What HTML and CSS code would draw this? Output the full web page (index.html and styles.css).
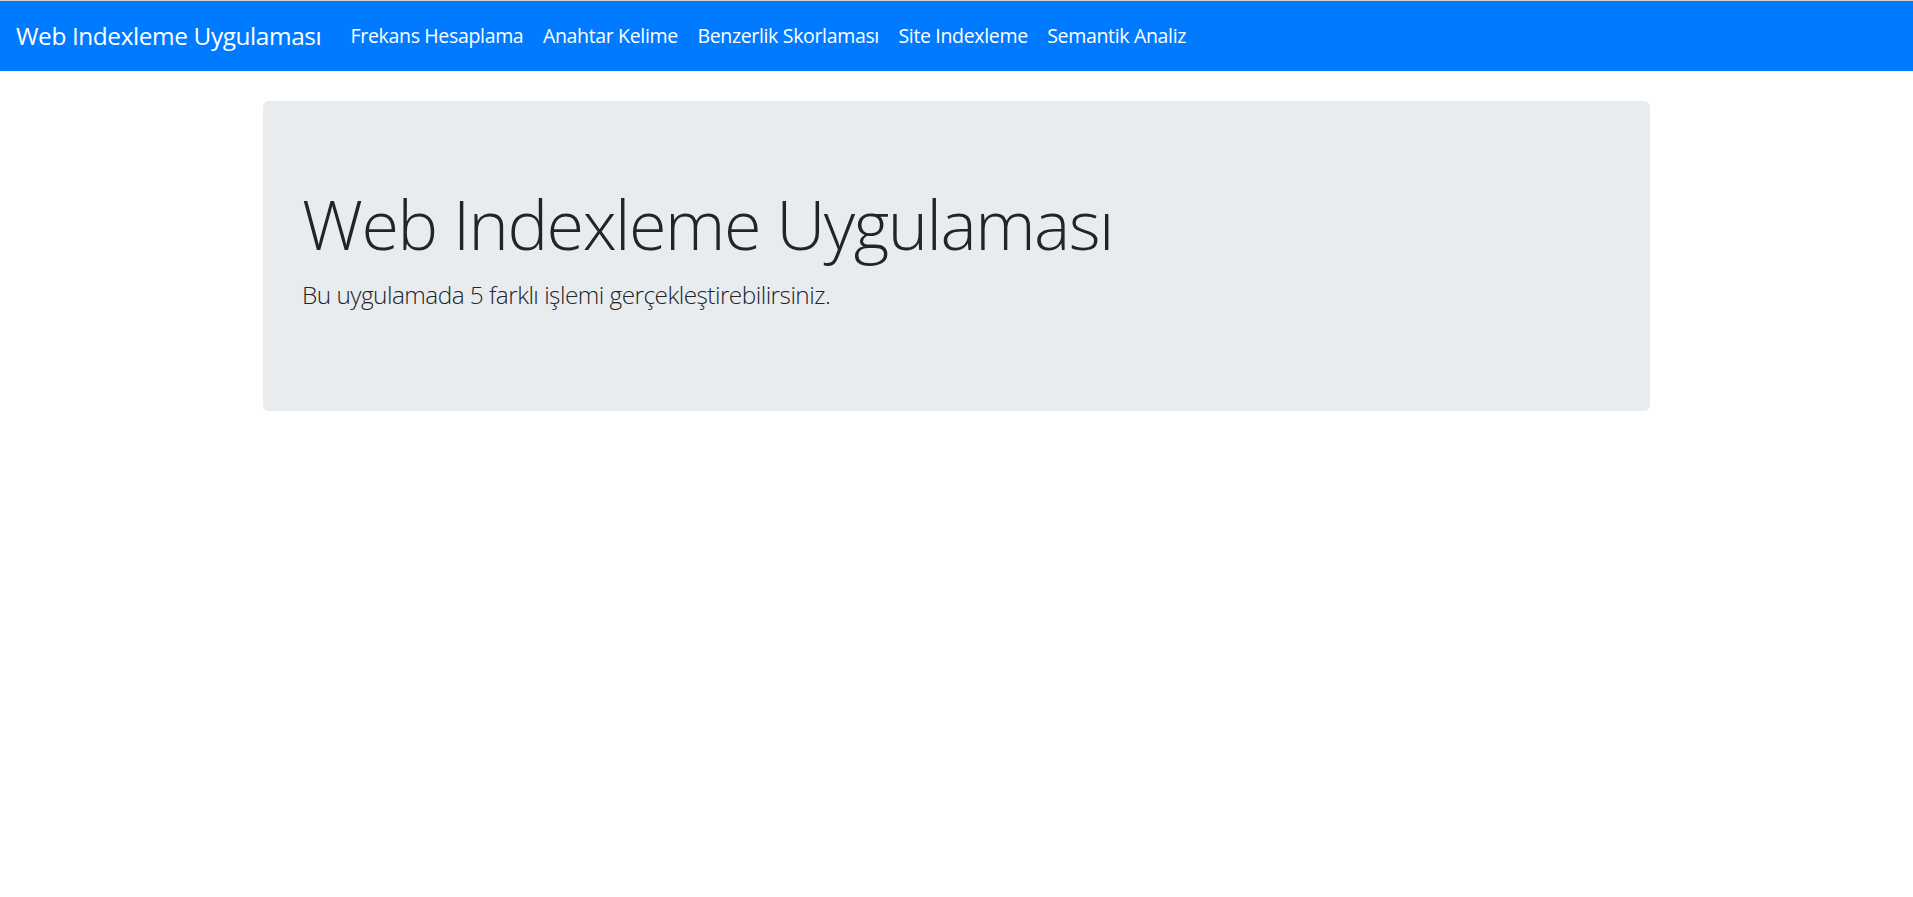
FILE: index.html
```html
<!DOCTYPE html>
<html lang="tr">
<head>
<meta charset="utf-8">
<title>Web Indexleme Uygulaması</title>
<link rel="stylesheet" href="styles.css">
</head>
<body>
<nav class="navbar">
  <a class="brand" href="#">Web Indexleme Uygulaması</a>
  <ul class="nav">
    <li><a class="nav-link" href="#">Frekans Hesaplama</a></li>
    <li><a class="nav-link" href="#">Anahtar Kelime</a></li>
    <li><a class="nav-link" href="#">Benzerlik Skorlaması</a></li>
    <li><a class="nav-link" href="#">Site Indexleme</a></li>
    <li><a class="nav-link" href="#">Semantik Analiz</a></li>
  </ul>
</nav>
<main class="jumbotron">
  <h1 class="display">Web Indexleme Uygulaması</h1>
  <p class="lead">Bu uygulamada 5 farklı işlemi gerçekleştirebilirsiniz.</p>
</main>
</body>
</html>
```
FILE: styles.css
```css
* { box-sizing: border-box; }
html, body { margin: 0; padding: 0; }
body {
  font-family: "Open Sans", "Noto Sans", "Liberation Sans", sans-serif;
  color: #212529;
  background: #fff;
  border-top: 1px solid #d4d4d4;
}
.navbar {
  display: flex;
  align-items: center;
  background: #007bff;
  padding: 9.76px 19.52px 9.76px 16px;
  height: 70px;
}
.brand {
  color: #fff;
  text-decoration: none;
  font-size: 24.4px;
  line-height: 36.6px;
  letter-spacing: -0.4px;
  padding: 6.1px 0;
  margin-right: 19.52px;
  white-space: nowrap;
}
.nav {
  display: flex;
  list-style: none;
  margin: 0;
  padding: 0;
}
.nav-link {
  display: block;
  color: #fff;
  text-decoration: none;
  font-size: 19.52px;
  line-height: 29.28px;
  letter-spacing: -0.34px;
  padding: 9.76px;
  white-space: nowrap;
}
.jumbotron {
  display: block;
  width: 1387px;
  margin: 30.3px auto 39px;
  padding: 81.7px 39.04px 78.08px;
  background: #e9ecef;
  border-radius: 5.86px;
}
.display {
  margin: 0 0 12.2px;
  font-size: 68.32px;
  font-weight: 300;
  line-height: 82px;
  letter-spacing: -1.5px;
}
.lead {
  margin: 0 0 19.52px;
  font-size: 24.4px;
  font-weight: 300;
  line-height: 36.6px;
  letter-spacing: -0.54px;
}
```
